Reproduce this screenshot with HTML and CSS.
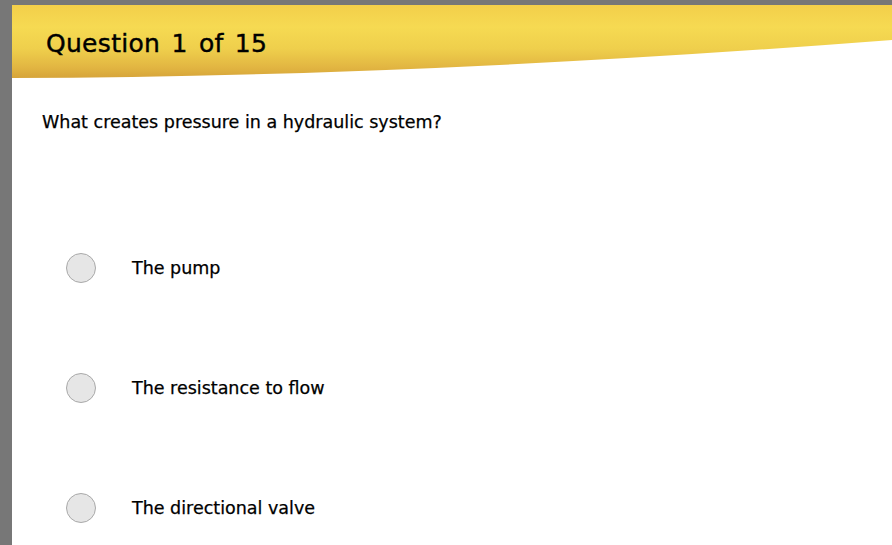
FILE: index.html
```html
<!DOCTYPE html>
<html>
<head>
<meta charset="utf-8">
<link rel="stylesheet" href="styles.css">
</head>
<body>
<div class="frame">
  <header class="banner">
    <h1 class="title">Question 1 of 15</h1>
  </header>
  <main class="content">
    <p class="question">What creates pressure in a hydraulic system?</p>
    <ul class="options">
      <li class="option"><span class="radio"></span><span class="label">The pump</span></li>
      <li class="option"><span class="radio"></span><span class="label">The resistance to flow</span></li>
      <li class="option"><span class="radio"></span><span class="label">The directional valve</span></li>
    </ul>
  </main>
</div>
</body>
</html>
```
FILE: styles.css
```css
html, body {
  margin: 0;
  padding: 0;
  height: 100%;
  overflow: hidden;
}
body {
  background: #777777;
  font-family: "DejaVu Sans", "Noto Sans", sans-serif;
  color: #000;
  -webkit-text-stroke: 0.25px #000;
}
.frame {
  margin: 5px 0 0 12px;
  background: #fff;
  height: 540px;
}
.banner {
  height: 73px;
  background:
    linear-gradient(180deg, #f3cf4a 0%, #f6da52 30%, #efcf4c 60%, #e2b642 85%, #d6a43a 100%);
  clip-path: path("M0 0 L880 0 L880 35 Q400 72 0 73 Z");
  display: flex;
  align-items: center;
}
.title {
  margin: 0 0 0 34px;
  font-size: 25px;
  font-weight: normal;
  letter-spacing: 0.3px;
  word-spacing: 3px;
  padding-top: 4px;
  -webkit-text-stroke: 0.4px #000;
}
.content {
  padding: 0 0 0 30px;
}
.question {
  margin: 33px 0 0 0;
  font-size: 17.5px;
  line-height: 22px;
}
.options {
  list-style: none;
  margin: 120px 0 0 0;
  padding: 0;
  display: flex;
  flex-direction: column;
  gap: 90px;
}
.option {
  display: flex;
  align-items: center;
  height: 30px;
}
.radio {
  width: 28px;
  height: 28px;
  border-radius: 50%;
  background: #e6e6e6;
  border: 1px solid #a9a9a9;
  margin-left: 24px;
  flex: none;
  -webkit-text-stroke: 0;
}
.label {
  margin-left: 36px;
  font-size: 17.5px;
}
```
